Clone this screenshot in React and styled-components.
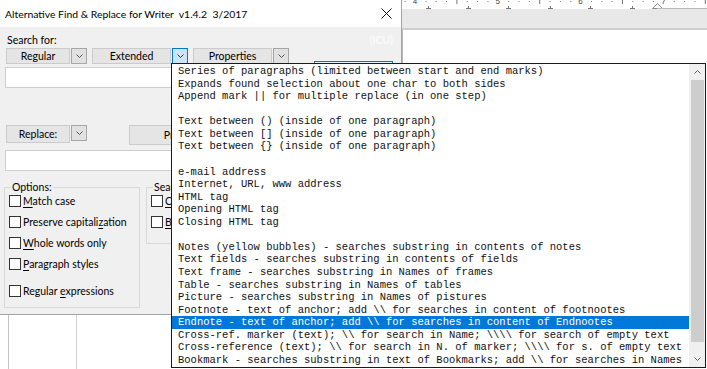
import React from 'react';
import styled, { createGlobalStyle } from 'styled-components';

const GlobalStyle = createGlobalStyle`
  html, body {
    margin: 0;
    padding: 0;
    background: #fff;
  }
`;

const Screen = styled.div`
  position: relative;
  width: 707px;
  height: 369px;
  overflow: hidden;
  background: #fff;
  font-family: Lato, "Noto Sans", sans-serif;
  font-size: 10.5px;
  color: #000;
`;

/* Writer window behind the dialog */
const Writer = styled.div`
  display: flex;
  flex-direction: column;
  height: 100%;
`;

const RulerSvg = styled.svg`
  display: block;
  flex: none;
`;

const ToolBand = styled.div`
  flex: none;
  height: 19px;
  background: #e8e8e8;
  border-bottom: 2px solid #cfcfcf;
`;

const DocArea = styled.div`
  flex: 1;
  display: flex;
`;

const DocColumn = styled.div`
  width: ${({ $w }) => $w}px;
  border-right: 1px solid ${({ $line }) => $line};
`;

/* Dialog */
const Dialog = styled.section`
  position: absolute;
  left: 0;
  top: 0;
  width: 402px;
  height: 315px;
  box-sizing: border-box;
  display: flex;
  flex-direction: column;
  background: #f0f0f0;
  border-right: 1px solid #a3a3a3;
  border-bottom: 1px solid #a3a3a3;
`;

const TitleBar = styled.header`
  flex: none;
  height: 27px;
  display: flex;
  align-items: center;
  justify-content: space-between;
  padding: 0 9px 0 5px;
  background: #fff;
`;

const Title = styled.span`
  white-space: pre;
  font-size: 10.4px;
  line-height: 14px;
`;

const Body = styled.div`
  flex: 1;
  display: flex;
  flex-direction: column;
  padding: 6px 8px 0 4px;
`;

const LabelRow = styled.div`
  display: flex;
  justify-content: space-between;
  align-items: center;
  height: 14px;
  line-height: 14px;
  padding-left: 3px;
`;

const IcuTag = styled.span`
  color: #fbfbfb;
  font-weight: 700;
`;

const ButtonRow = styled.div`
  display: flex;
  align-items: flex-start;
  gap: ${({ $gap }) => $gap ?? 5}px;
  margin-top: ${({ $top }) => $top}px;
  padding-left: 2px;
`;

const Split = styled.div`
  display: flex;
  gap: 1px;
`;

const PushButton = styled.div`
  width: ${({ $w }) => $w}px;
  height: ${({ $h }) => $h ?? 16}px;
  box-sizing: border-box;
  display: flex;
  align-items: center;
  justify-content: center;
  border: 1px solid ${({ $focused }) => ($focused ? '#0078d7' : '#cbcbcb')};
  background: ${({ $focused }) => ($focused ? '#e5f1fb' : '#e5e5e5')};
  line-height: 14px;
  white-space: nowrap;
`;

const ArrowButton = styled.div`
  width: 16px;
  height: 16px;
  box-sizing: border-box;
  display: flex;
  align-items: center;
  justify-content: center;
  border: 1px solid ${({ $focused }) => ($focused ? '#0078d7' : '#a6a6a6')};
  background: ${({ $focused }) => ($focused ? '#cce4f7' : '#e1e1e1')};
`;

const FieldRow = styled.div`
  display: flex;
  align-items: flex-start;
  gap: 7px;
  margin-top: ${({ $top }) => $top}px;
`;

const TextField = styled.div`
  width: ${({ $w }) => $w}px;
  height: 21px;
  box-sizing: border-box;
  margin-top: ${({ $top }) => $top ?? 0}px;
  margin-left: 1px;
  background: #fff;
  border: 1px solid #cdcdcd;
`;

const Groups = styled.div`
  display: flex;
  align-items: flex-start;
  gap: 6px;
  margin-top: 9px;
`;

const Group = styled.fieldset`
  width: ${({ $w }) => $w}px;
  height: ${({ $h }) => $h}px;
  box-sizing: border-box;
  margin: 0;
  padding: 0 0 0 4px;
  min-width: 0;
  border: 1px solid #d9d9d9;
  display: flex;
  flex-direction: column;
`;

const Legend = styled.legend`
  margin-left: 2px;
  padding: 0 1px;
  line-height: 14px;
`;

const Check = styled.label`
  display: flex;
  align-items: center;
  gap: 2px;
  height: 14px;
  line-height: 14px;
  margin-top: ${({ $top }) => $top}px;
  white-space: nowrap;
`;

const Box = styled.span`
  flex: none;
  width: 12px;
  height: 12px;
  box-sizing: border-box;
  border: 1px solid #333;
  background: #fff;
`;

const Mn = styled.span`
  text-decoration: underline;
  text-underline-offset: 2px;
`;

/* Dropdown list */
const Popup = styled.div`
  position: absolute;
  left: 171px;
  top: 63px;
  width: 535px;
  height: 305px;
  box-sizing: border-box;
  display: flex;
  background: #fff;
  border: 1px solid #1b1b1b;
`;

const List = styled.ul`
  flex: 1;
  margin: 0;
  padding: 1px 0 0;
  list-style: none;
  font-family: "Liberation Mono", "Courier New", monospace;
  font-size: 10.5px;
  line-height: 12.57px;
`;

const Item = styled.li`
  height: 12.57px;
  padding-left: 6px;
  white-space: pre;
  background: ${({ $selected }) => ($selected ? '#0078d7' : 'transparent')};
  color: ${({ $selected }) => ($selected ? '#fff' : '#111')};
`;

const Scrollbar = styled.div`
  flex: none;
  width: 16px;
  display: flex;
  flex-direction: column;
  align-items: center;
  background: #f0f0f0;
`;

const ScrollArrow = styled.div`
  flex: none;
  height: 16px;
  width: 100%;
  display: flex;
  align-items: center;
  justify-content: center;
`;

const Thumb = styled.div`
  flex: none;
  width: 13px;
  height: 262px;
  background: #cdcdcd;
`;

const Track = styled.div`
  flex: 1;
`;

const OPTIONS = [
  'Series of paragraphs (limited between start and end marks)',
  'Expands found selection about one char to both sides',
  'Append mark || for multiple replace (in one step)',
  '',
  'Text between () (inside of one paragraph)',
  'Text between [] (inside of one paragraph)',
  'Text between {} (inside of one paragraph)',
  '',
  'e-mail address',
  'Internet, URL, www address',
  'HTML tag',
  'Opening HTML tag',
  'Closing HTML tag',
  '',
  'Notes (yellow bubbles) - searches substring in contents of notes',
  'Text fields - searches substring in contents of fields',
  'Text frame - searches substring in Names of frames',
  'Table - searches substring in Names of tables',
  'Picture - searches substring in Names of pistures',
  String.raw`Footnote - text of anchor; add \\ for searches in content of footnootes`,
  String.raw`Endnote - text of anchor; add \\ for searches in content of Endnootes`,
  String.raw`Cross-ref. marker (text); \\ for search in Name; \\\\ for search of empty text`,
  String.raw`Cross-reference (text); \\ for search in N. of marker; \\\\ for s. of empty text`,
  String.raw`Bookmark - searches substring in text of Bookmarks; add \\ for searches in Names`,
];

const Chevron = ({ up, color = '#555' }) => (
  <svg width="7" height="4" viewBox="0 0 7 4">
    <polyline
      points={up ? '0.5,3.5 3.5,0.5 6.5,3.5' : '0.5,0.5 3.5,3.5 6.5,0.5'}
      fill="none"
      stroke={color}
      strokeWidth="1"
    />
  </svg>
);

const CloseIcon = () => (
  <svg width="11" height="11" viewBox="0 0 11 11">
    <path d="M0.5 0.5 L10.5 10.5 M10.5 0.5 L0.5 10.5" stroke="#111" strokeWidth="1" />
  </svg>
);

const Ruler = () => {
  const unit = 82.8;
  const base = 415;
  const numbers = [4, 5, 6, 7];
  const dots = [];
  const halves = [];
  for (let k = -1; k < 4; k++) {
    const x0 = base + k * unit;
    halves.push(x0 + unit / 2);
    for (let i = 1; i < 8; i++) {
      if (i !== 4) dots.push(x0 + (i * unit) / 8);
    }
  }
  const tabs = [428, 468, 508, 550, 590, 632];
  return (
    <RulerSvg width="707" height="9" viewBox="0 0 707 9">
      <rect x="0" y="0" width="707" height="9" fill="#fff" />
      {dots.map((x) => (
        <rect key={`d${x}`} x={x} y="1" width="1" height="1" fill="#777" />
      ))}
      {halves.map((x) => (
        <rect key={`h${x}`} x={x} y="0" width="1" height="4" fill="#777" />
      ))}
      {numbers.map((n, i) => (
        <text
          key={n}
          x={base + i * unit}
          y="4"
          fontSize="8"
          fontFamily="Liberation Sans, sans-serif"
          textAnchor="middle"
          fill="#444"
        >
          {n}
        </text>
      ))}
      {tabs.map((x) => (
        <path key={`t${x}`} d={`M${x - 2} 8.5 H${x + 3} M${x + 0.5} 6 V8.5`} stroke="#777" strokeWidth="1" />
      ))}
      <path d="M652.5 8.5 L657.5 3.5 L662.5 8.5 Z" fill="#fff" stroke="#888" strokeWidth="1" />
      <rect x="657" y="8" width="50" height="1" fill="#bbb" />
    </RulerSvg>
  );
};

const App = () => {
  return (
    <Screen>
      <GlobalStyle />
      <Writer>
        <Ruler />
        <ToolBand />
        <DocArea>
          <DocColumn $w={8} $line="#c4c4c4" />
          <DocColumn $w={67} $line="#d2d2d2" />
          <DocColumn $w={325} $line="#b8b8b8" />
        </DocArea>
      </Writer>

      <Dialog>
        <TitleBar>
          <Title>Alternative Find &amp; Replace for Writer  v1.4.2  3/2017</Title>
          <CloseIcon />
        </TitleBar>
        <Body>
          <LabelRow>
            <span>Search for:</span>
            <IcuTag>(ICU)</IcuTag>
          </LabelRow>
          <ButtonRow $top={1}>
            <Split>
              <PushButton $w={64}>Regular</PushButton>
              <ArrowButton>
                <Chevron />
              </ArrowButton>
            </Split>
            <Split>
              <PushButton $w={79}>Extended</PushButton>
              <ArrowButton $focused>
                <Chevron color="#333" />
              </ArrowButton>
            </Split>
            <Split>
              <PushButton $w={79}>Properties</PushButton>
              <ArrowButton>
                <Chevron />
              </ArrowButton>
            </Split>
          </ButtonRow>
          <FieldRow $top={-3}>
            <TextField $w={303} $top={6} />
            <PushButton $w={79} $h={25} $focused>
              Find
            </PushButton>
          </FieldRow>
          <ButtonRow $top={37} $gap={42}>
            <Split>
              <PushButton $w={64} $h={18}>
                Replace:
              </PushButton>
              <ArrowButton>
                <Chevron />
              </ArrowButton>
            </Split>
            <PushButton $w={117} $h={20}>
              Properties
            </PushButton>
          </ButtonRow>
          <FieldRow $top={5}>
            <TextField $w={303} />
          </FieldRow>
          <Groups>
            <Group $w={136} $h={128}>
              <Legend>Options:</Legend>
              <Check $top={0}>
                <Box />
                <span>
                  <Mn>M</Mn>atch case
                </span>
              </Check>
              <Check $top={7}>
                <Box />
                <span>
                  Preserve capitali<Mn>z</Mn>ation
                </span>
              </Check>
              <Check $top={7}>
                <Box />
                <span>
                  <Mn>W</Mn>hole words only
                </span>
              </Check>
              <Check $top={7}>
                <Box />
                <span>
                  <Mn>P</Mn>aragraph styles
                </span>
              </Check>
              <Check $top={13}>
                <Box />
                <span>
                  Regular <Mn>e</Mn>xpressions
                </span>
              </Check>
            </Group>
            <Group $w={150} $h={64}>
              <Legend>Search area:</Legend>
              <Check $top={0}>
                <Box />
                <span>
                  <Mn>C</Mn>urrent selection only
                </span>
              </Check>
              <Check $top={7}>
                <Box />
                <span>
                  <Mn>B</Mn>ackwards
                </span>
              </Check>
            </Group>
          </Groups>
        </Body>
      </Dialog>

      <Popup>
        <List>
          {OPTIONS.map((text, i) => (
            <Item key={i} $selected={i === 20}>
              {text}
            </Item>
          ))}
        </List>
        <Scrollbar>
          <ScrollArrow>
            <Chevron up color="#606060" />
          </ScrollArrow>
          <Thumb />
          <Track />
          <ScrollArrow>
            <Chevron color="#606060" />
          </ScrollArrow>
        </Scrollbar>
      </Popup>
    </Screen>
  );
};

export default App;
